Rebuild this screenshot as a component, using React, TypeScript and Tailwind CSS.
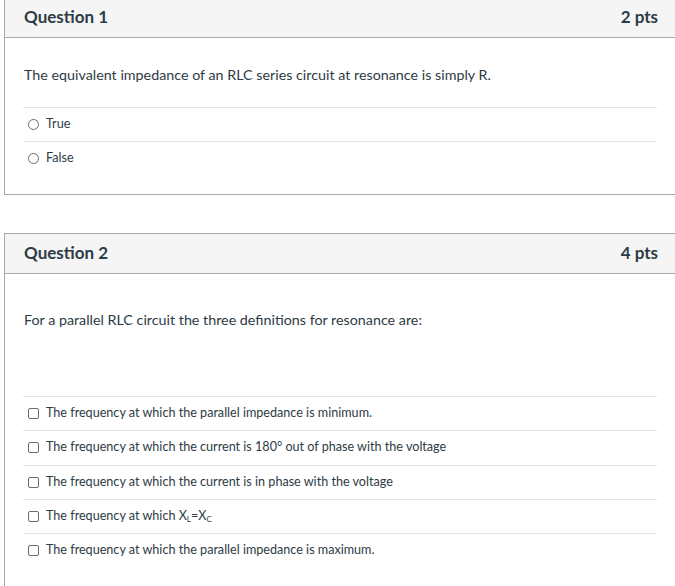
const font = { fontFamily: 'Lato, "Noto Sans", sans-serif' };

function Radio({ label }: { label: string }) {
  return (
    <div className="flex h-[34px] items-center border-t border-[#e4e4e4] pb-[1px] pl-[5px]">
      <span className="mr-[7px] h-[11px] w-[11px] rounded-full border border-[#6b6b6b] bg-white" />
      <span className="text-[12.6px] text-[#2d3b45]">{label}</span>
    </div>
  );
}

function Check({ children }: { children: React.ReactNode }) {
  return (
    <div className="flex h-[34.25px] items-center border-t border-[#e4e4e4] pl-[5px]">
      <span className="mr-[7px] h-[11px] w-[11px] rounded-[2px] border border-[#6b6b6b] bg-white" />
      <span className="text-[12.6px] text-[#2d3b45]">{children}</span>
    </div>
  );
}

function Header({ title, pts }: { title: string; pts: string }) {
  return (
    <div className="flex h-[40px] items-center border-b border-[#a9a9a9] bg-[#f5f5f5] pb-[2px]">
      <div className="ml-[19px] flex w-[634px] items-center justify-between text-[17px] font-bold text-[#2d3b45]">
        <span>{title}</span>
        <span>{pts}</span>
      </div>
    </div>
  );
}

export default function App() {
  return (
    <div className="min-h-screen w-full overflow-hidden bg-white" style={font}>
      <div className="-mt-[3px] ml-[4px] w-[720px] border border-[#a9a9a9]">
        <Header title="Question 1" pts="2 pts" />
        <div className="ml-[18px] w-[634px] pb-[19px] pt-[27px]">
          <p className="mb-[22px] pl-[1px] text-[14.3px] leading-[20px] text-[#2d3b45]">
            The equivalent impedance of an RLC series circuit at resonance is simply R.
          </p>
          <Radio label="True" />
          <Radio label="False" />
        </div>
      </div>

      <div className="mt-[38px] ml-[4px] w-[720px] border border-[#a9a9a9]">
        <Header title="Question 2" pts="4 pts" />
        <div className="ml-[18px] w-[634px] pb-[40px] pt-[36px]">
          <p className="mb-[66px] pl-[1px] text-[14.3px] leading-[20px] text-[#2d3b45]">
            For a parallel RLC circuit the three definitions for resonance are:
          </p>
          <Check>The frequency at which the parallel impedance is minimum.</Check>
          <Check>The frequency at which the current is 180° out of phase with the voltage</Check>
          <Check>The frequency at which the current is in phase with the voltage</Check>
          <Check>
            The frequency at which X<sub className="text-[8px]">L</sub>=X<sub className="text-[8px]">C</sub>
          </Check>
          <Check>The frequency at which the parallel impedance is maximum.</Check>
        </div>
      </div>
    </div>
  );
}
